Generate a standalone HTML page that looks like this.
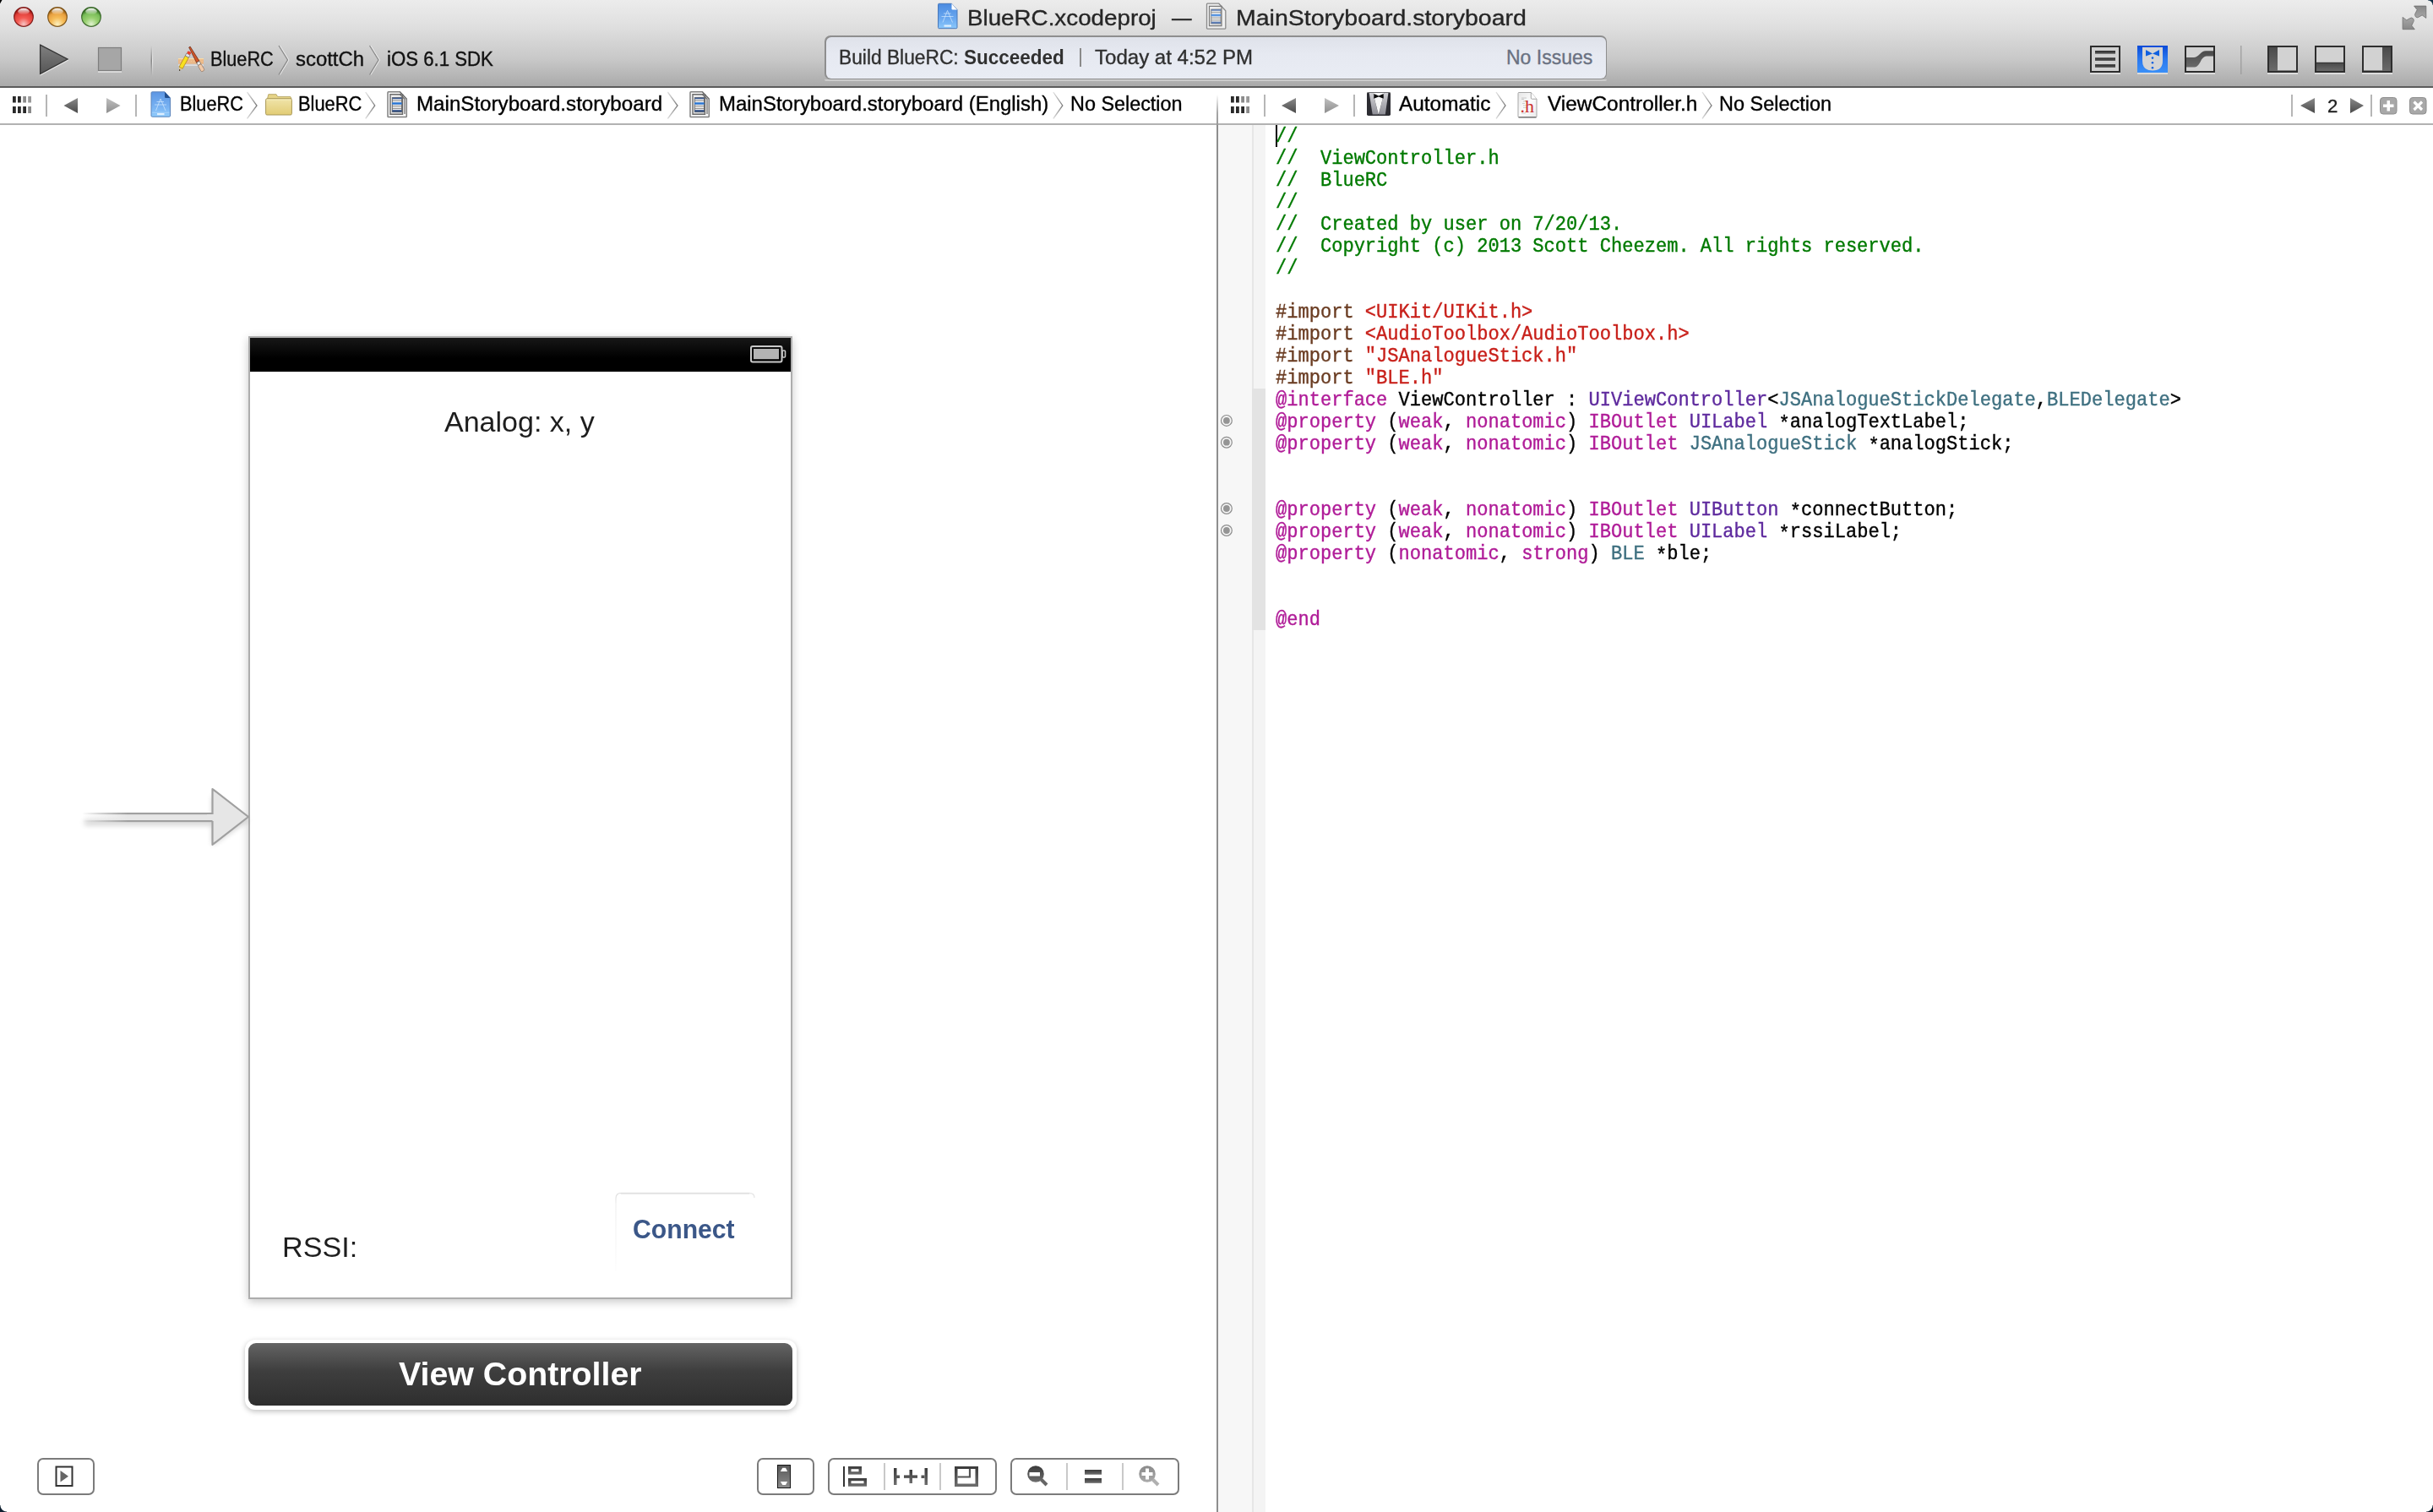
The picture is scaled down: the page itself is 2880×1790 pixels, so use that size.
<!DOCTYPE html>
<html><head><meta charset="utf-8">
<style>
*{margin:0;padding:0;box-sizing:border-box}
html,body{width:2880px;height:1790px;overflow:hidden;background:#fff;font-family:"Liberation Sans",sans-serif}
.a{position:absolute}
.t{position:absolute;white-space:pre;line-height:1;transform-origin:0 0;font-family:"Liberation Sans",sans-serif}
svg{position:absolute;overflow:visible}
#code{position:absolute;left:1510px;top:148.5px;-webkit-text-stroke:0.4px;font-family:"Liberation Mono",monospace;font-size:24px;line-height:26px;white-space:pre;color:#000;transform-origin:0 0;transform:scaleX(0.9188)}
.cm{color:#007a00}.pp{color:#6a3c22}.st{color:#c8201a}.kw{color:#b01c98}.cl{color:#5e2a9e}.pc{color:#3f7080}
.light{position:absolute;width:24px;height:24px;border-radius:50%}
.tbtn{position:absolute;top:54px;width:36px;height:32px;background:#2c2c2c;box-shadow:0 2px 0 rgba(255,255,255,0.45)}
.bbtn{position:absolute;top:1726px;height:44px;border:2px solid #7b7b7b;border-radius:7px;background:#fff}
.bsep{position:absolute;top:1732px;width:2px;height:32px;background:#c9c9c9}
.jsep{position:absolute;top:112px;width:2px;height:26px;background:#b9b9b9}
.ast{position:relative;top:3px}

</style></head><body>
<div class="a" style="left:0;top:0;width:2880px;height:102px;background:linear-gradient(#ececec 0px,#e0e0e0 30px,#c8c8c8 70px,#ababab 101px)"></div>
<div class="a" style="left:0;top:102px;width:2880px;height:2px;background:#5c5c5c"></div>
<!-- window corners -->
<svg style="left:0;top:0" width="6" height="6"><path d="M0 0 H2.5 L0 4.5 Z" fill="#000"/></svg>
<div class="a" style="left:2874px;top:0;width:6px;height:6px;background:radial-gradient(circle at 0 6px,transparent 5px,#0a2a40 6px)"></div>
<div class="a" style="left:0;top:1782px;width:8px;height:8px;background:radial-gradient(circle at 8px 0,transparent 7px,#0f1f2f 8px)"></div>
<div class="a" style="left:2872px;top:1782px;width:8px;height:8px;background:radial-gradient(circle at 0 0,transparent 7px,#0f1f2f 8px)"></div>

<!-- traffic lights -->
<svg style="left:0;top:0" width="140" height="40">
<defs>
<radialGradient id="lr" cx="50%" cy="88%" r="75%"><stop offset="0" stop-color="#f6c4c4"/><stop offset="0.45" stop-color="#f45a52"/><stop offset="0.8" stop-color="#e0403a"/><stop offset="1" stop-color="#a81c18"/></radialGradient>
<radialGradient id="ly" cx="50%" cy="88%" r="75%"><stop offset="0" stop-color="#fbf0c0"/><stop offset="0.45" stop-color="#f6bc58"/><stop offset="0.8" stop-color="#e8a040"/><stop offset="1" stop-color="#a86a18"/></radialGradient>
<radialGradient id="lg" cx="50%" cy="88%" r="75%"><stop offset="0" stop-color="#e0f2d0"/><stop offset="0.45" stop-color="#98d070"/><stop offset="0.8" stop-color="#78bc58"/><stop offset="1" stop-color="#3e7a28"/></radialGradient>
<linearGradient id="lh" x1="0" y1="0" x2="0" y2="1"><stop offset="0" stop-color="#fff" stop-opacity="1"/><stop offset="1" stop-color="#fff" stop-opacity="0"/></linearGradient>
</defs>
<g stroke-width="1.2" stroke-opacity="0.85">
<circle cx="28" cy="20" r="11.3" fill="url(#lr)" stroke="#720c0a"/>
<circle cx="68" cy="20" r="11.3" fill="url(#ly)" stroke="#6e4408"/>
<circle cx="108" cy="20" r="11.3" fill="url(#lg)" stroke="#2c5a1c"/>
</g>
<ellipse cx="28" cy="13.6" rx="6.8" ry="3.8" fill="url(#lh)"/>
<ellipse cx="68" cy="13.6" rx="6.8" ry="3.8" fill="url(#lh)"/>
<ellipse cx="108" cy="13.6" rx="6.8" ry="3.8" fill="url(#lh)"/>
</svg>

<!-- play / stop -->
<svg style="left:0;top:0" width="200" height="100"><defs>
<linearGradient id="gplay" x1="0" y1="0" x2="0" y2="1"><stop offset="0" stop-color="#808080"/><stop offset="1" stop-color="#555"/></linearGradient>
<linearGradient id="gsep" x1="0" y1="0" x2="0" y2="1"><stop offset="0" stop-color="#888" stop-opacity="0"/><stop offset="0.5" stop-color="#888"/><stop offset="1" stop-color="#888" stop-opacity="0"/></linearGradient>
<linearGradient id="gsepw" x1="0" y1="0" x2="0" y2="1"><stop offset="0" stop-color="#eee" stop-opacity="0"/><stop offset="0.5" stop-color="#eee"/><stop offset="1" stop-color="#eee" stop-opacity="0"/></linearGradient>
</defs>
<path d="M47.5 89 L81 71" stroke="#e6e6e6" stroke-width="1.4"/>
<path d="M47.6 53.2 L80 70 L47.6 87.5 Z" fill="url(#gplay)" stroke="#333" stroke-width="1.3" stroke-linejoin="miter"/>
<rect x="116" y="84" width="28" height="2" fill="#dcdcdc"/>
<rect x="116.5" y="56.5" width="27" height="27" fill="#a6a6a6" stroke="#7e7e7e" stroke-width="1.2"/>
<rect x="178.5" y="54" width="1.6" height="36" fill="url(#gsep)"/><rect x="180.1" y="54" width="1" height="36" fill="url(#gsepw)"/>
</svg>
<!-- xcode icon -->
<svg style="left:210px;top:54px" width="34" height="34" viewBox="0 0 34 34">
<rect x="1" y="15" width="30" height="6.7" fill="#ebb888"/>
<rect x="1" y="15" width="30" height="1.2" fill="#f8dca8"/>
<path d="M3 18.5 H30" stroke="#f8d0a0" stroke-width="0.8" stroke-dasharray="1 2.2"/>
<rect x="1" y="22.5" width="30" height="1.2" fill="#e8e8ec"/>
<g transform="translate(14.4,1.6) rotate(60.7)">
<path d="M0 -0.9 L20.3 -1.9 V1.9 L0 0.9 Z" fill="#d0582a" stroke="#5a1a08" stroke-width="0.6"/>
<rect x="20.3" y="-1.9" width="3.7" height="3.8" fill="#ececec" stroke="#444" stroke-width="0.5"/>
<rect x="24" y="-2.2" width="8.7" height="4.4" rx="1.6" fill="#f2caa8" stroke="#7a5a48" stroke-width="0.5"/>
</g>
<g transform="translate(2.1,29.9) rotate(-61.3)">
<path d="M0 0 L4.2 -2.3 V2.3 Z" fill="#e8c880"/>
<path d="M0 0 L1.6 -0.9 V0.9 Z" fill="#111"/>
<rect x="4.2" y="-2.3" width="15" height="4.6" fill="#f8e020" stroke="#a87810" stroke-width="0.6"/>
<rect x="19.2" y="-2.3" width="3.4" height="4.6" fill="#e4e4ec" stroke="#555" stroke-width="0.5"/>
<rect x="22.6" y="-2.3" width="3.4" height="4.6" rx="1.5" fill="#e8402c"/>
</g>
</svg>
<!-- scheme chevrons -->
<svg style="left:0;top:0" width="600" height="100">
<path d="M330 54 L340.5 71 L330 88.5" fill="none" stroke="#8a8a8a" stroke-width="1.3"/>
<path d="M331.5 54 L342 71 L331.5 88.5" fill="none" stroke="#eaeaea" stroke-width="1"/>
<path d="M437.5 54 L448 71 L437.5 88.5" fill="none" stroke="#8a8a8a" stroke-width="1.3"/>
<path d="M439 54 L449.5 71 L439 88.5" fill="none" stroke="#eaeaea" stroke-width="1"/>
</svg>

<!-- title icons -->
<svg style="left:1108px;top:0" width="30" height="40">
<defs>
<linearGradient id="gproj3" x1="0" y1="0" x2="0" y2="1"><stop offset="0" stop-color="#4a8ae0"/><stop offset="0.6" stop-color="#6aa8f0"/><stop offset="1" stop-color="#8ac8fc"/></linearGradient>
</defs>
<g transform="translate(1.5,3.5)">
<path d="M1 2 Q1 0.8 2.2 0.8 H17 L23.5 8 V29 Q23.5 30.2 22.3 30.2 H2.2 Q1 30.2 1 29 Z" fill="url(#gproj3)" stroke="#4a78b8" stroke-width="1"/>
<path d="M17 0.8 L23.5 8 H18.2 Q17 8 17 6.8 Z" fill="#fff"/>
<path d="M12 9 L6.5 23 M12 9 L18 23 M5 16 H19 M7.5 12.5 H16" stroke="#d6ecff" stroke-width="0.9" fill="none" opacity="0.75"/>
<rect x="8" y="26" width="8.5" height="2.2" fill="#e8f4ff" opacity="0.9"/>
</g>
</svg>
<svg style="left:1426px;top:0" width="30" height="40">
<defs><linearGradient id="gsbp2" x1="0" y1="0" x2="1" y2="1"><stop offset="0" stop-color="#f4f4f4"/><stop offset="1" stop-color="#d6d6d6"/></linearGradient></defs>
<g transform="translate(1.5,3.5)">
<path d="M1 1.5 Q1 0.7 1.8 0.7 H15.3 L23.3 9.2 V29.8 Q23.3 30.6 22.5 30.6 H1.8 Q1 30.6 1 29.8 Z" fill="#f0f0f0" stroke="#8a8a8a" stroke-width="1.3"/>
<path d="M4 3.8 H18.5 V27.2 H4 Z" fill="url(#gsbp2)" stroke="#7a7a7a" stroke-width="1.2"/>
<rect x="6.3" y="7.6" width="11.3" height="16.8" fill="#e6e6e6" stroke="#6a6a6a" stroke-width="0.8"/>
<rect x="6.3" y="7.6" width="11.3" height="1.6" fill="#5a7ab2"/>
<path d="M6.3 11 H17.6 M6.3 17.6 H17.6 M6.3 20.4 H17.6" stroke="#888" stroke-width="0.7"/>
<rect x="6" y="13.2" width="11.8" height="2.6" rx="1" fill="#5a96e2"/>
<rect x="6.3" y="22.2" width="11.3" height="2.2" fill="#5a7ab2"/>
</g>
</svg>

<!-- activity view -->
<div class="a" style="left:976px;top:42px;width:926px;height:52px;border-radius:7px;background:#8e8e8e"></div>
<div class="a" style="left:977.5px;top:43.5px;width:923px;height:49px;border-radius:6px;background:linear-gradient(#dfe2ea,#e6e9f1 40%,#e9ecf4)"></div>
<div class="a" style="left:976px;top:94px;width:926px;height:2px;border-radius:0 0 7px 7px;background:rgba(255,255,255,0.35)"></div>
<div class="a" style="left:1277.5px;top:57px;width:2px;height:22px;background:#8a8a8a"></div>

<!-- right toolbar icons -->
<svg style="left:2460px;top:45px" width="400" height="50">
<defs>
<linearGradient id="gbar" x1="0" y1="0" x2="0" y2="1"><stop offset="0" stop-color="#2a2a2a"/><stop offset="1" stop-color="#5a5a5a"/></linearGradient>
<linearGradient id="gdk" x1="0" y1="0" x2="0" y2="1"><stop offset="0" stop-color="#4a4a4a"/><stop offset="1" stop-color="#6a6a6a"/></linearGradient>
<linearGradient id="gblue" x1="0" y1="0" x2="0" y2="1"><stop offset="0" stop-color="#0a4ad8"/><stop offset="0.5" stop-color="#2a78ee"/><stop offset="1" stop-color="#3a90f8"/></linearGradient>
</defs>
<!-- list -->
<rect x="14" y="41" width="36" height="2" fill="#dcdcdc"/>
<rect x="14" y="9" width="36" height="32" fill="#2c2c2c"/>
<rect x="16" y="11" width="32" height="28" fill="#d0d0d0"/>
<rect x="20" y="15" width="24" height="3.7" fill="url(#gbar)"/>
<rect x="20" y="23.3" width="24" height="3.7" fill="url(#gbar)"/>
<rect x="20" y="31.2" width="24" height="3.7" fill="url(#gbar)"/>
<!-- tuxedo blue -->
<rect x="70" y="41" width="36" height="2" fill="#dcdcdc"/>
<rect x="70" y="9" width="36" height="32" fill="url(#gblue)"/>
<path d="M76 11 H100 V27 Q100 38.5 88 38.5 Q76 38.5 76 27 Z" fill="#d4d4d4"/>
<path d="M80 14 L88 18.5 L96 14 V21.5 L88 18.5 L80 21.5 Z" fill="#1060e0"/>
<circle cx="88" cy="23.6" r="1.3" fill="#1060e0"/><circle cx="88" cy="29.3" r="1.3" fill="#1060e0"/><circle cx="88" cy="35.3" r="1.3" fill="#1060e0"/>
<!-- version -->
<rect x="126" y="41" width="36" height="2" fill="#dcdcdc"/>
<rect x="126" y="9" width="36" height="32" fill="#2c2c2c"/>
<rect x="128" y="11" width="32" height="28" fill="#d2d2d2"/>
<path d="M128 23 H137 Q140 23 144 19 Q147 15.2 151 15.2 H160 V21.4 H152 Q149 21.4 146 25.5 Q142 34.5 138 34.5 H128 Z" fill="url(#gdk)"/>
<!-- sep -->
<rect x="192" y="9" width="1.5" height="34" fill="#9a9a9a" opacity="0.8"/>
<!-- left panel -->
<rect x="224" y="41" width="36" height="2" fill="#dcdcdc"/>
<rect x="224" y="9" width="36" height="32" fill="#2e2e2e"/>
<rect x="226" y="11" width="10" height="28" fill="url(#gdk)"/>
<rect x="236" y="11" width="22" height="27.5" fill="#d2d2d2"/>
<!-- bottom panel -->
<rect x="280" y="41" width="36" height="2" fill="#dcdcdc"/>
<rect x="280" y="9" width="36" height="32" fill="#2e2e2e"/>
<rect x="282" y="11" width="32" height="17.8" fill="#d2d2d2"/>
<rect x="282" y="29.8" width="32" height="9.2" fill="url(#gdk)"/>
<!-- right panel -->
<rect x="336" y="41" width="36" height="2" fill="#dcdcdc"/>
<rect x="336" y="9" width="36" height="32" fill="#2e2e2e"/>
<rect x="338" y="11" width="22" height="27.5" fill="#d2d2d2"/>
<rect x="360" y="11" width="10" height="28" fill="url(#gdk)"/>
</svg>
<!-- fullscreen icon -->
<svg style="left:2843px;top:6px" width="30" height="30" viewBox="0 0 30 30">
<defs><linearGradient id="gfs" x1="0" y1="0" x2="0" y2="1"><stop offset="0" stop-color="#888"/><stop offset="1" stop-color="#a8a8a8"/></linearGradient></defs>
<g id="fsarr" fill="url(#gfs)" stroke="#6e6e6e" stroke-width="0.8" stroke-linejoin="round">
<path d="M14.6 1.1 H28.8 V15.4 L24.1 11.9 L20.5 14 Q18 15.8 16.2 13.6 Q14.6 11.4 16.5 9 L18.2 5.6 Z"/>
<path d="M14.6 1.1 H28.8 V15.4 L24.1 11.9 L20.5 14 Q18 15.8 16.2 13.6 Q14.6 11.4 16.5 9 L18.2 5.6 Z" transform="rotate(180 14.95 14.9)"/>
</g>
</svg>

<div class="a" style="left:0;top:104px;width:2880px;height:42px;background:#fff"></div>
<div class="a" style="left:0;top:146px;width:2880px;height:2px;background:#b2b2b2"></div>
<svg style="left:0;top:104px" width="2880" height="44">
<defs>
<linearGradient id="garr" x1="0" y1="0" x2="0" y2="1"><stop offset="0" stop-color="#8a8a8a"/><stop offset="1" stop-color="#4a4a4a"/></linearGradient>
<linearGradient id="garr2" x1="0" y1="0" x2="0" y2="1"><stop offset="0" stop-color="#c0c0c0"/><stop offset="1" stop-color="#8e8e8e"/></linearGradient>
<linearGradient id="gfold" x1="0" y1="0" x2="0" y2="1"><stop offset="0" stop-color="#f0e4aa"/><stop offset="1" stop-color="#e2cc74"/></linearGradient>
<linearGradient id="gproj2" x1="0" y1="0" x2="0" y2="1"><stop offset="0" stop-color="#5c96e4"/><stop offset="0.6" stop-color="#78b2f2"/><stop offset="1" stop-color="#90ccfc"/></linearGradient>
<linearGradient id="gsbp" x1="0" y1="0" x2="1" y2="1"><stop offset="0" stop-color="#f4f4f4"/><stop offset="1" stop-color="#d6d6d6"/></linearGradient>
<linearGradient id="gdoc" x1="0" y1="0" x2="1" y2="1"><stop offset="0" stop-color="#e6e6e6"/><stop offset="0.5" stop-color="#fbfbfb"/><stop offset="1" stop-color="#ececec"/></linearGradient>
<linearGradient id="gtux" x1="0" y1="0" x2="0" y2="1"><stop offset="0" stop-color="#d2d2d6"/><stop offset="1" stop-color="#8e8e96"/></linearGradient>
</defs>
<!-- left grid icon -->
<g transform="translate(15,10)">
<rect x="0" y="0" width="3.8" height="7.5" fill="#2a2a2a"/><rect x="6" y="0" width="3.8" height="7.5" fill="#2a2a2a"/><rect x="12.2" y="0" width="3.8" height="7.5" fill="#8a8a8a"/><rect x="18.2" y="0" width="3.8" height="7.5" fill="#9a9a9a"/>
<rect x="0" y="12" width="3.8" height="8" fill="#2a2a2a"/><rect x="6" y="12" width="3.8" height="8" fill="#2a2a2a"/><rect x="12.2" y="12" width="3.8" height="8" fill="#2a2a2a"/><rect x="18.2" y="12" width="3.8" height="8" fill="#8a8a8a"/>
</g>
<rect x="54" y="8" width="2" height="26" fill="#b6b6b6"/>
<path d="M75.5 21 L92 12 V30 Z" fill="url(#garr)"/>
<path d="M142.5 21 L126 12 V30 Z" fill="url(#garr2)"/>
<rect x="160" y="8" width="2" height="26" fill="#b6b6b6"/>
<!-- project icon -->
<g transform="translate(178,4)">
<path d="M1 2 Q1 0.8 2.2 0.8 H17 L23.5 8 V29 Q23.5 30.2 22.3 30.2 H2.2 Q1 30.2 1 29 Z" fill="url(#gproj2)" stroke="#5a84bc" stroke-width="1"/>
<path d="M17 0.8 L23.5 8 H18.2 Q17 8 17 6.8 Z" fill="#24508e"/>
<path d="M12 9 L6.5 23 M12 9 L18 23 M5 16 H19 M7.5 12.5 H16" stroke="#d6ecff" stroke-width="0.9" fill="none" opacity="0.75"/>
<rect x="2" y="24.8" width="20.5" height="0.7" fill="#cfe6ff" opacity="0.7"/>
<rect x="8" y="26" width="8.5" height="2.2" fill="#e8f4ff" opacity="0.9"/>
</g>
<!-- chevrons -->
<linearGradient id="gchev" gradientUnits="userSpaceOnUse" x1="0" y1="4" x2="0" y2="38"><stop offset="0" stop-color="#e8e8e8"/><stop offset="0.5" stop-color="#7a7a7a"/><stop offset="1" stop-color="#e8e8e8"/></linearGradient>
<g fill="none" stroke="url(#gchev)" stroke-width="1.3">
<path d="M292.5 5 L304 21 L292.5 36.5"/>
<path d="M432.7 5 L443.7 21 L432.7 36.5"/>
<path d="M790.4 5 L802 21 L790.4 36.5"/>
<path d="M1246.8 5 L1257.8 21 L1246.8 36.5"/>
<path d="M1771 5 L1782 21 L1771 36.5"/>
<path d="M2015 5 L2026 21 L2015 36.5"/>
</g>
<!-- folder -->
<g transform="translate(314,7)">
<path d="M2.5 6 L3.8 0.7 H13 L14.6 3.4 H29.8 L31 6 Z" fill="#e6d488" stroke="#b4a462" stroke-width="0.9" stroke-linejoin="round"/>
<rect x="0.6" y="5.8" width="30.8" height="19.2" rx="1.5" fill="url(#gfold)" stroke="#a89858" stroke-width="1"/>
<rect x="1.6" y="6.6" width="28.8" height="0.9" fill="#f8f0c0"/>
</g>
<!-- storyboard icons -->
<g transform="translate(458,4)">
<path d="M1 1.5 Q1 0.7 1.8 0.7 H15.3 L23.3 9.2 V29.8 Q23.3 30.6 22.5 30.6 H1.8 Q1 30.6 1 29.8 Z" fill="#fbfbfb" stroke="#808080" stroke-width="1.5"/>
<path d="M15.3 0.7 L23.3 9.2" stroke="#707070" stroke-width="1.2"/>
<path d="M4 3.8 H18.5 V27.2 H4 Z" fill="url(#gsbp)" stroke="#6a6a6a" stroke-width="1.4"/>
<path d="M15.5 3.8 L21 9.2 V27" fill="none" stroke="#6a6a6a" stroke-width="1.2"/>
<rect x="6.3" y="7.6" width="11.3" height="16.8" fill="#ececec" stroke="#585858" stroke-width="0.8"/>
<rect x="6.3" y="7.6" width="11.3" height="1.6" fill="#3a5a92"/>
<path d="M6.3 11 H17.6 M6.3 17.6 H17.6 M6.3 20.4 H17.6" stroke="#666" stroke-width="0.7"/>
<rect x="6" y="13.2" width="11.8" height="2.6" rx="1" fill="#2a76d2"/>
<rect x="6.3" y="22.2" width="11.3" height="2.2" fill="#2e4e86"/>
</g>
<g transform="translate(816,4)">
<path d="M1 1.5 Q1 0.7 1.8 0.7 H15.3 L23.3 9.2 V29.8 Q23.3 30.6 22.5 30.6 H1.8 Q1 30.6 1 29.8 Z" fill="#fbfbfb" stroke="#808080" stroke-width="1.5"/>
<path d="M15.3 0.7 L23.3 9.2" stroke="#707070" stroke-width="1.2"/>
<path d="M4 3.8 H18.5 V27.2 H4 Z" fill="url(#gsbp)" stroke="#6a6a6a" stroke-width="1.4"/>
<path d="M15.5 3.8 L21 9.2 V27" fill="none" stroke="#6a6a6a" stroke-width="1.2"/>
<rect x="6.3" y="7.6" width="11.3" height="16.8" fill="#ececec" stroke="#585858" stroke-width="0.8"/>
<rect x="6.3" y="7.6" width="11.3" height="1.6" fill="#3a5a92"/>
<path d="M6.3 11 H17.6 M6.3 17.6 H17.6 M6.3 20.4 H17.6" stroke="#666" stroke-width="0.7"/>
<rect x="6" y="13.2" width="11.8" height="2.6" rx="1" fill="#2a76d2"/>
<rect x="6.3" y="22.2" width="11.3" height="2.2" fill="#2e4e86"/>
</g>
<!-- divider in jumpbar -->
<linearGradient id="gdiv" x1="0" y1="0" x2="0" y2="1"><stop offset="0" stop-color="#fff"/><stop offset="0.6" stop-color="#a6a6a6"/><stop offset="1" stop-color="#999"/></linearGradient>
<rect x="1440" y="8" width="2" height="36" fill="url(#gdiv)"/>
<!-- right grid icon -->
<g transform="translate(1457,10)">
<rect x="0" y="0" width="3.8" height="7.5" fill="#2a2a2a"/><rect x="6" y="0" width="3.8" height="7.5" fill="#2a2a2a"/><rect x="12.2" y="0" width="3.8" height="7.5" fill="#8a8a8a"/><rect x="18.2" y="0" width="3.8" height="7.5" fill="#9a9a9a"/>
<rect x="0" y="12" width="3.8" height="8" fill="#2a2a2a"/><rect x="6" y="12" width="3.8" height="8" fill="#2a2a2a"/><rect x="12.2" y="12" width="3.8" height="8" fill="#2a2a2a"/><rect x="18.2" y="12" width="3.8" height="8" fill="#8a8a8a"/>
</g>
<rect x="1496" y="8" width="2" height="26" fill="#b6b6b6"/>
<path d="M1517 21 L1534 12 V30 Z" fill="url(#garr)"/>
<path d="M1585 21 L1568 12 V30 Z" fill="url(#garr2)"/>
<rect x="1602" y="8" width="2" height="26" fill="#b6b6b6"/>
<!-- tuxedo -->
<g transform="translate(1618,5)">
<rect x="0" y="0" width="28" height="28" rx="1.8" fill="#2c2c32"/>
<path d="M2.7 1 H7.2 L13.6 26.5 H6.7 Z" fill="url(#gtux)"/>
<path d="M20.5 1 H25.4 L21.8 26.5 H14 Z" fill="url(#gtux)"/>
<path d="M7.2 1 H20.5 L14 26 H13.6 Z" fill="#f6f6f6"/>
<path d="M8.3 2 L14 4.6 L19.7 2 V7.8 L14 5.4 L8.3 7.8 Z" fill="#0a0a0a"/>
<rect x="0" y="0" width="28" height="1" fill="#9a9a9a" opacity="0.6"/>
</g>
<!-- .h icon -->
<g transform="translate(1796,5)">
<path d="M1 1.5 Q1 0.5 2 0.5 H16.3 L23 8.2 V28.8 Q23 30 21.8 30 H2.2 Q1 30 1 28.8 Z" fill="url(#gdoc)" stroke="#a6a6a6" stroke-width="1"/>
<path d="M16.3 0.5 V7 Q16.3 8.2 17.5 8.2 H23" fill="#fff" stroke="#a6a6a6" stroke-width="1"/>
<rect x="1.5" y="29" width="21" height="1.5" fill="#6a6a6a" opacity="0.8"/>
<path d="M5 7 H11 M5 8.5 H8 M7 11 H13 M6 13.5 H9 M7 16 H12 M7 18.5 H11 M5 25 H10" stroke="#b0b0b0" stroke-width="0.6"/>
<text x="3.6" y="24" font-family="Liberation Serif" font-size="22" fill="#cc3030">.h</text>
</g>
<!-- right nav -->
<rect x="2712" y="8" width="2" height="26" fill="#b6b6b6"/>
<path d="M2723 21 L2740 12 V30 Z" fill="url(#garr)"/>
<path d="M2798 21 L2782 12 V30 Z" fill="url(#garr)"/>
<rect x="2806" y="8" width="2" height="26" fill="#b6b6b6"/>
<rect x="2817.5" y="11.5" width="19.5" height="19.5" rx="3.5" fill="#a8a8a8" stroke="#8e8e8e" stroke-width="1"/>
<path d="M2827.25 15 V27.5 M2821 21.25 H2833.5" stroke="#fff" stroke-width="3.5"/>
<rect x="2852.5" y="11.5" width="19.5" height="19.5" rx="3.5" fill="#a8a8a8" stroke="#8e8e8e" stroke-width="1"/>
<path d="M2857.5 16.5 L2867 26 M2867 16.5 L2857.5 26" stroke="#fff" stroke-width="3.2"/>
</svg>

<!-- phone frame -->
<div class="a" style="left:294px;top:398px;width:644px;height:1140px;border:2px solid #adadad;background:#fff;box-shadow:0 3px 10px rgba(0,0,0,0.22)"></div>
<div class="a" style="left:296px;top:400px;width:640px;height:40px;background:linear-gradient(#171717,#000 60%)"></div>
<svg style="left:880px;top:400px" width="60" height="40">
<rect x="9" y="10" width="36.5" height="18.5" rx="2" fill="none" stroke="#c8c8c8" stroke-width="2"/>
<rect x="12" y="13" width="30" height="12.2" fill="#b4b4b4"/>
<rect x="46" y="15" width="3.5" height="8" rx="1" fill="none" stroke="#c8c8c8" stroke-width="1.6"/>
</svg>
<!-- connect button border (only top visible) -->
<svg style="left:720px;top:1405px" width="190" height="110">
<defs><linearGradient id="gcb" gradientUnits="userSpaceOnUse" x1="0" y1="7" x2="0" y2="100"><stop offset="0" stop-color="#d8d8d8"/><stop offset="0.15" stop-color="#f0f0f0"/><stop offset="1" stop-color="#fcfcfc"/></linearGradient></defs>
<path d="M9 100 V14 Q9 7.5 15 7.5" fill="none" stroke="url(#gcb)" stroke-width="1.2"/>
<path d="M173 13 Q173 7.5 167 7.5" fill="none" stroke="#e8e8e8" stroke-width="1.4"/>
<path d="M15 7.8 H167" stroke="#e2e2e2" stroke-width="2"/>
</svg>
<!-- view controller bar -->
<div class="a" style="left:289.5px;top:1585.5px;width:653px;height:83px;border-radius:12px;background:#fff;box-shadow:0 2px 6px rgba(0,0,0,0.25)"></div>
<div class="a" style="left:294px;top:1590px;width:644px;height:74px;border-radius:9px;background:linear-gradient(#646464,#3e3e3e 45%,#2e2e2e)"></div>
<!-- entry arrow -->
<svg style="left:60px;top:920px" width="250" height="100">
<defs>
<linearGradient id="gshaft" x1="0" y1="0" x2="1" y2="0"><stop offset="0" stop-color="#a0a0a0" stop-opacity="0"/><stop offset="0.35" stop-color="#a0a0a0" stop-opacity="1"/><stop offset="1" stop-color="#a0a0a0"/></linearGradient>
<linearGradient id="gshaftf" x1="0" y1="0" x2="1" y2="0"><stop offset="0" stop-color="#e6e6e6" stop-opacity="0"/><stop offset="0.35" stop-color="#e6e6e6"/><stop offset="1" stop-color="#e6e6e6"/></linearGradient>
<filter id="fsh" x="-20%" y="-50%" width="140%" height="200%"><feGaussianBlur stdDeviation="3"/></filter>
</defs>
<path d="M40 47 H191 V17 L234.5 47 L191 77 V53 H40 Z" fill="#000" opacity="0.18" filter="url(#fsh)" transform="translate(0,4)"/>
<rect x="37" y="42.5" width="155" height="10" fill="url(#gshaftf)"/>
<rect x="37" y="42" width="155" height="2.2" fill="url(#gshaft)"/>
<rect x="37" y="51" width="155" height="2.2" fill="url(#gshaft)"/>
<path d="M191.5 44 V14 L234 47 L191.5 80 V52" fill="#e6e6e6" stroke="#a0a0a0" stroke-width="2.2" stroke-linejoin="round"/>
<rect x="185" y="44.2" width="7.5" height="6.8" fill="#e6e6e6"/>
</svg>

<!-- bottom toolbar -->
<div class="bbtn" style="left:44px;width:67.5px"></div>
<svg style="left:44px;top:1726px" width="68" height="44">
<rect x="22.5" y="10.5" width="19" height="22.5" fill="#fff" stroke="#333" stroke-width="2"/>
<path d="M27.5 15 L37 21.8 L27.5 28.5 Z" fill="#666"/>
</svg>
<div class="bbtn" style="left:896px;width:68px"></div>
<div class="bbtn" style="left:980px;width:199.5px"></div>
<div class="bsep" style="left:1046px"></div>
<div class="bsep" style="left:1112px"></div>
<div class="bbtn" style="left:1196px;width:199.5px"></div>
<div class="bsep" style="left:1262px"></div>
<div class="bsep" style="left:1328px"></div>
<svg style="left:880px;top:1720px" width="540" height="60">
<defs>
<linearGradient id="gic" x1="0" y1="0" x2="0" y2="1"><stop offset="0" stop-color="#3a3a3a"/><stop offset="1" stop-color="#6e6e6e"/></linearGradient>
<linearGradient id="gud" x1="0" y1="0" x2="0" y2="1"><stop offset="0" stop-color="#585858"/><stop offset="1" stop-color="#8c8c8c"/></linearGradient>
<linearGradient id="gic2" x1="0" y1="0" x2="0" y2="1"><stop offset="0" stop-color="#8a8a8a"/><stop offset="1" stop-color="#aaaaaa"/></linearGradient>
</defs>
<!-- pin up/down -->
<rect x="40.5" y="14.5" width="15" height="27" fill="url(#gud)" stroke="#151515" stroke-width="1"/>
<path d="M46.3 17.8 H50 L52.1 22 H43.8 Z" fill="#fff"/>
<path d="M43.8 33.9 H52.1 L50 38 H46.3 Z" fill="#fff"/>
<!-- align -->
<rect x="118" y="16" width="2" height="24" fill="#333"/>
<rect x="124" y="16" width="16" height="9.6" fill="url(#gic)"/><rect x="127.5" y="19.2" width="9" height="3" fill="#fff"/>
<rect x="124" y="30" width="22" height="9.7" fill="url(#gic)"/><rect x="127.5" y="33.2" width="15" height="3" fill="#fff"/>
<!-- pin -->
<rect x="178" y="18" width="3.5" height="20" fill="url(#gic)"/><rect x="181" y="26.5" width="4" height="3.5" fill="#555"/>
<rect x="190" y="26.5" width="16" height="3.5" fill="url(#gic)"/><rect x="196.5" y="20" width="3.5" height="16" fill="url(#gic)"/>
<rect x="214.5" y="18" width="3.5" height="20" fill="url(#gic)"/><rect x="210.5" y="26.5" width="4" height="3.5" fill="#555"/>
<!-- resize -->
<rect x="250" y="16" width="28" height="24" fill="url(#gic)"/>
<rect x="253.5" y="19" width="21" height="17.5" fill="#fff"/>
<path d="M253.5 28.5 H268 V19" fill="none" stroke="#555" stroke-width="2.2"/>
<!-- zoom out -->
<circle cx="346" cy="25" r="9.8" fill="url(#gic)"/>
<rect x="338.5" y="23" width="12.5" height="4.5" fill="#fff"/>
<path d="M352.5 31.5 L359 38" stroke="#666" stroke-width="4"/>
<!-- equal -->
<rect x="404" y="20" width="20" height="5.7" fill="url(#gic)"/>
<rect x="404" y="30" width="20" height="5.8" fill="url(#gic)"/>
<!-- zoom in (disabled) -->
<circle cx="478" cy="25" r="9.8" fill="url(#gic2)"/>
<path d="M478 18.5 V31.5 M471.5 25 H484.5" stroke="#fff" stroke-width="4"/>
<path d="M484.5 31.5 L491 38" stroke="#b0b0b0" stroke-width="4"/>
</svg>

<div class="a" style="left:1440px;top:148px;width:2px;height:1642px;background:#8e8e8e"></div>
<div class="a" style="left:1442px;top:148px;width:40px;height:1642px;background:#f7f7f7"></div>
<div class="a" style="left:1482px;top:148px;width:16px;height:1642px;background:#f4f4f4"></div>
<div class="a" style="left:1482px;top:148px;width:2px;height:1642px;background:#e6e6e6"></div>
<div class="a" style="left:1482px;top:460px;width:16px;height:286px;background:#e3e3e3"></div>
<svg style="left:1436px;top:480px" width="40" height="120">
<g fill="none" stroke="#8c8c8c" stroke-width="1.2"><circle cx="15.9" cy="17.9" r="6.4"/><circle cx="15.9" cy="43.7" r="6.4"/></g>
<g fill="#959595"><circle cx="15.9" cy="17.9" r="3.9"/><circle cx="15.9" cy="43.7" r="3.9"/></g>
</svg>
<svg style="left:1436px;top:586px" width="40" height="60">
<g fill="none" stroke="#8c8c8c" stroke-width="1.2"><circle cx="15.9" cy="16" r="6.4"/><circle cx="15.9" cy="42" r="6.4"/></g>
<g fill="#959595"><circle cx="15.9" cy="16" r="3.9"/><circle cx="15.9" cy="42" r="3.9"/></g>
</svg>
<div class="a" style="left:1510px;top:148px;width:2px;height:26px;background:#000"></div>
<div id="code"><span class="cm">//
//  ViewController.h
//  BlueRC
//
//  Created by user on 7/20/13.
//  Copyright (c) 2013 Scott Cheezem. All rights reserved.
//</span>

<span class="pp">#import </span><span class="st">&lt;UIKit/UIKit.h&gt;</span>
<span class="pp">#import </span><span class="st">&lt;AudioToolbox/AudioToolbox.h&gt;</span>
<span class="pp">#import </span><span class="st">"JSAnalogueStick.h"</span>
<span class="pp">#import </span><span class="st">"BLE.h"</span>
<span class="kw">@interface</span> ViewController : <span class="cl">UIViewController</span>&lt;<span class="pc">JSAnalogueStickDelegate</span>,<span class="pc">BLEDelegate</span>&gt;
<span class="kw">@property</span> (<span class="kw">weak</span>, <span class="kw">nonatomic</span>) <span class="kw">IBOutlet</span> <span class="cl">UILabel</span> <span class="ast">*</span>analogTextLabel;
<span class="kw">@property</span> (<span class="kw">weak</span>, <span class="kw">nonatomic</span>) <span class="kw">IBOutlet</span> <span class="pc">JSAnalogueStick</span> <span class="ast">*</span>analogStick;


<span class="kw">@property</span> (<span class="kw">weak</span>, <span class="kw">nonatomic</span>) <span class="kw">IBOutlet</span> <span class="cl">UIButton</span> <span class="ast">*</span>connectButton;
<span class="kw">@property</span> (<span class="kw">weak</span>, <span class="kw">nonatomic</span>) <span class="kw">IBOutlet</span> <span class="cl">UILabel</span> <span class="ast">*</span>rssiLabel;
<span class="kw">@property</span> (<span class="kw">nonatomic</span>, <span class="kw">strong</span>) <span class="pc">BLE</span> <span class="ast">*</span>ble;


<span class="kw">@end</span></div>

<div class="t" style="left:1144.9px;top:7.7px;font-size:26.5px;font-weight:400;color:#262626;transform:scaleX(1.0476);-webkit-text-stroke:0.35px #262626">BlueRC.xcodeproj</div>
<div class="t" style="left:1387.0px;top:7.7px;font-size:26.5px;font-weight:400;color:#2a2a2a;transform:scaleX(0.8889);-webkit-text-stroke:0.35px #2a2a2a">—</div>
<div class="t" style="left:1462.8px;top:7.7px;font-size:26.5px;font-weight:400;color:#262626;transform:scaleX(1.0759);-webkit-text-stroke:0.35px #262626">MainStoryboard.storyboard</div>
<div class="t" style="left:993.2px;top:57.0px;font-size:23px;font-weight:400;color:#303030;transform:scaleX(0.9892);-webkit-text-stroke:0.35px #303030">Build BlueRC:</div>
<div class="t" style="left:1141.0px;top:57.0px;font-size:23px;font-weight:700;color:#303030;transform:scaleX(0.9782);-webkit-text-stroke:0px #303030">Succeeded</div>
<div class="t" style="left:1296.0px;top:57.0px;font-size:23px;font-weight:400;color:#303030;transform:scaleX(1.0452);-webkit-text-stroke:0.35px #303030">Today at 4:52 PM</div>
<div class="t" style="left:1783.0px;top:57.0px;font-size:23px;font-weight:400;color:#6a7181;transform:scaleX(1.0000);-webkit-text-stroke:0.35px #6a7181">No Issues</div>
<div class="t" style="left:249.4px;top:58.9px;font-size:23px;font-weight:400;color:#111;transform:scaleX(0.9434);-webkit-text-stroke:0.35px #111">BlueRC</div>
<div class="t" style="left:350.0px;top:58.9px;font-size:23px;font-weight:400;color:#111;transform:scaleX(1.0395);-webkit-text-stroke:0.35px #111">scottCh</div>
<div class="t" style="left:458.4px;top:58.9px;font-size:23px;font-weight:400;color:#111;transform:scaleX(0.9659);-webkit-text-stroke:0.35px #111">iOS 6.1 SDK</div>
<div class="t" style="left:213.3px;top:112.3px;font-size:23px;font-weight:400;color:#000;transform:scaleX(0.9447);-webkit-text-stroke:0.35px #000">BlueRC</div>
<div class="t" style="left:353.1px;top:112.3px;font-size:23px;font-weight:400;color:#000;transform:scaleX(0.9513);-webkit-text-stroke:0.35px #000">BlueRC</div>
<div class="t" style="left:492.6px;top:112.3px;font-size:23px;font-weight:400;color:#000;transform:scaleX(1.0493);-webkit-text-stroke:0.35px #000">MainStoryboard.storyboard</div>
<div class="t" style="left:850.8px;top:112.3px;font-size:23px;font-weight:400;color:#000;transform:scaleX(1.0418);-webkit-text-stroke:0.35px #000">MainStoryboard.storyboard (English)</div>
<div class="t" style="left:1267.3px;top:112.3px;font-size:23px;font-weight:400;color:#000;transform:scaleX(1.0165);-webkit-text-stroke:0.35px #000">No Selection</div>
<div class="t" style="left:1656.0px;top:112.3px;font-size:23px;font-weight:400;color:#000;transform:scaleX(1.0608);-webkit-text-stroke:0.35px #000">Automatic</div>
<div class="t" style="left:1832.0px;top:112.3px;font-size:23px;font-weight:400;color:#000;transform:scaleX(1.0614);-webkit-text-stroke:0.35px #000">ViewController.h</div>
<div class="t" style="left:2035.0px;top:112.3px;font-size:23px;font-weight:400;color:#000;transform:scaleX(1.0197);-webkit-text-stroke:0.35px #000">No Selection</div>
<div class="t" style="left:2754.5px;top:115.4px;font-size:22px;font-weight:400;color:#222;transform:scaleX(1.0100);-webkit-text-stroke:0.35px #222">2</div>
<div class="t" style="left:526.1px;top:482.4px;font-size:34px;font-weight:400;color:#1e1e1e;transform:scaleX(1.0006);-webkit-text-stroke:0px #1e1e1e">Analog: x, y</div>
<div class="t" style="left:334.3px;top:1458.5px;font-size:34px;font-weight:400;color:#1e1e1e;transform:scaleX(1.0036);-webkit-text-stroke:0px #1e1e1e">RSSI:</div>
<div class="t" style="left:749.4px;top:1439.0px;font-size:32px;font-weight:700;color:#3b5788;transform:scaleX(0.9425);-webkit-text-stroke:0px #3b5788">Connect</div>
<div class="t" style="left:471.7px;top:1608.2px;font-size:38px;font-weight:700;color:#ffffff;transform:scaleX(1.0345);-webkit-text-stroke:0px #ffffff">View Controller</div>
</body></html>
